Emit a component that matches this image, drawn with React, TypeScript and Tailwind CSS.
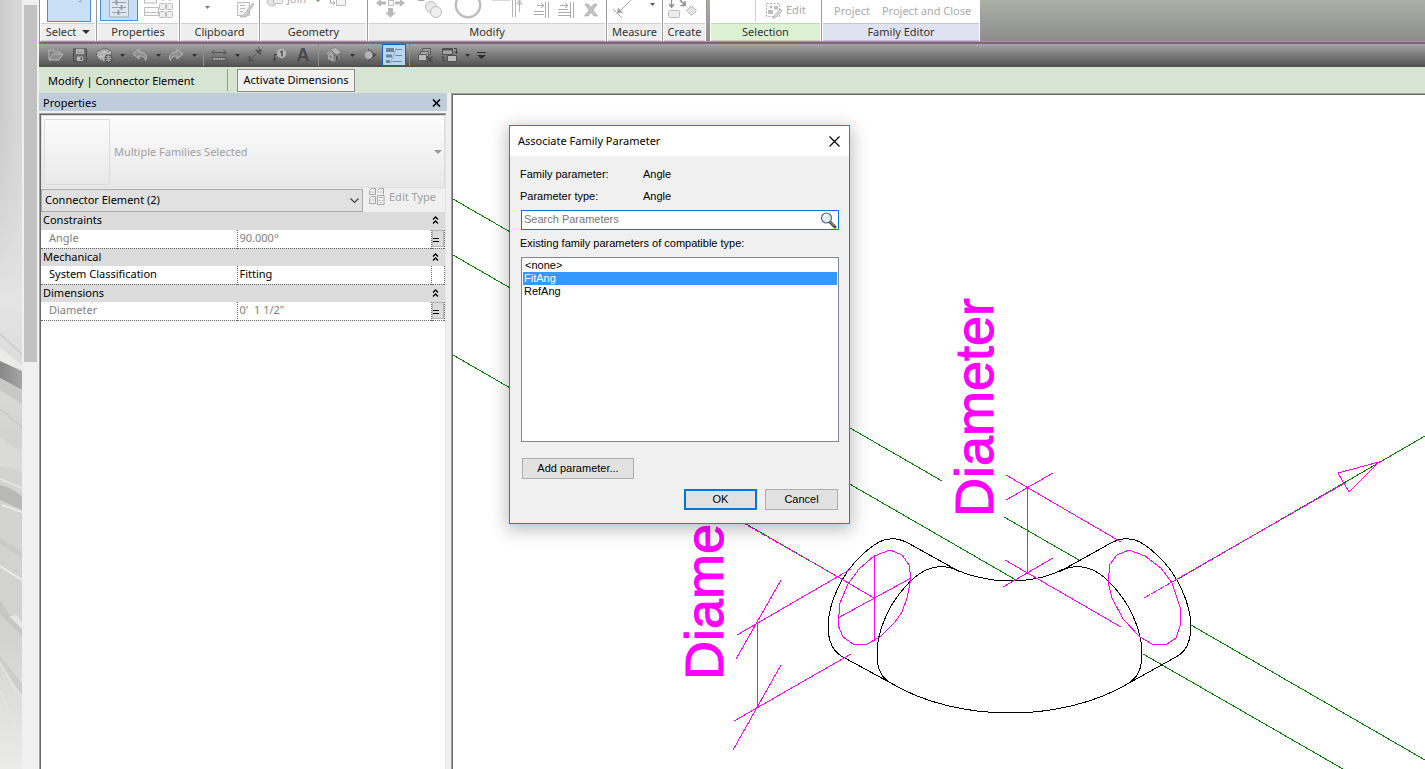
import React, { useState, type ReactNode } from 'react';

const UI = "font-['Noto_Sans','Open_Sans',sans-serif] text-[11px] leading-4";

/* ---------- small drawings ---------- */

function Caret({ className }: { className: string }) {
  return (
    <svg width="8" height="4" viewBox="0 0 8 4" className={className} aria-hidden="true">
      <path d="M0 0h8L4 4z" fill="currentColor" />
    </svg>
  );
}

function Backdrop() {
  return (
    <svg width="22" height="769" viewBox="0 0 22 769" preserveAspectRatio="none" className="block h-full w-[22px] shrink-0" aria-hidden="true">
      <defs>
        <linearGradient id="bdTop" x1="0" y1="0" x2="1" y2="0">
          <stop offset="0" stopColor="#cbcbcb" />
          <stop offset="1" stopColor="#dadada" />
        </linearGradient>
        <linearGradient id="bdLow" x1="0" y1="0" x2="0" y2="1">
          <stop offset="0" stopColor="#d6d6d6" stopOpacity="0" />
          <stop offset="0.3" stopColor="#e4e4e4" />
          <stop offset="0.5" stopColor="#d3d3d2" />
          <stop offset="0.8" stopColor="#d2d2d1" />
          <stop offset="1" stopColor="#ebebea" />
        </linearGradient>
        <linearGradient id="bdDark" x1="0" y1="0" x2="1" y2="0">
          <stop offset="0" stopColor="#868686" />
          <stop offset="1" stopColor="#a6a6a6" />
        </linearGradient>
      </defs>
      <rect width="22" height="769" fill="url(#bdTop)" />
      <rect y="100" width="22" height="669" fill="url(#bdLow)" />
      <path d="M0 333L22 353v2L0 335z" fill="#cdcdcd" />
      <path d="M0 348L22 365v6L0 361z" fill="#ebebea" />
      <path d="M0 361L22 371v19L0 378z" fill="url(#bdDark)" />
      <path d="M0 378L22 390v14L0 390z" fill="#c8c8c7" />
      <path d="M0 409L22 427" stroke="#bcbcbb" />
      <path d="M0 436Q12 450 22 449v22L0 466z" fill="#dadad9" />
      <path d="M0 479L22 488" stroke="#e6e6e5" strokeWidth="2" />
      <path d="M0 485Q12 488 22 496v14L0 500z" fill="#b9b9b8" />
      <path d="M2 505L22 512" stroke="#e9e9e8" strokeWidth="2" />
      <path d="M0 538L22 552v6L0 544z" fill="#cacac9" />
      <path d="M0 566L22 580" stroke="#ececeb" strokeWidth="2" />
      <path d="M0 600L9 614l13 8v14L0 614z" fill="#c6c6c5" />
      <path d="M9 616l8-1 5 8v6z" fill="#e6e6e5" />
      <path d="M0 655L22 684v10L0 666z" fill="#cdcdcc" />
      <path d="M0 663L22 700" stroke="#e3e3e2" strokeWidth="2" />
      <path d="M0 690L20 740" stroke="#e6e6e5" />
    </svg>
  );
}

const light = '#b9b9b9';
const mid = '#8b8b8b';
const dark = '#4a4a4a';

const OpenIcon = () => (
  <svg width="18" height="16" viewBox="0 0 18 16">
    <path d="M2 13V3h4l1 2h6v2" fill="none" stroke={light} />
    <path d="M2 13l4-6h10l-4 6z" fill={mid} stroke={light} />
  </svg>
);
const SaveIcon = () => (
  <svg width="16" height="16" viewBox="0 0 16 16">
    <path d="M1.500 2h13v12h-13z" fill="#6c6c6c" stroke={dark} />
    <path d="M4 2h8v5H4z" fill={light} />
    <path d="M5 9.500h6V14H5z" fill={light} />
    <path d="M8.500 10.500h1.500V13H8.500z" fill={dark} />
    <path d="M5 4h6M5 5.500h6" stroke={mid} strokeWidth=".7" />
  </svg>
);
const CubesIcon = () => (
  <svg width="17" height="16" viewBox="0 0 17 16">
    <path d="M1 4.500L4.500 3 8 1l4 1.500L15.500 4v6L8 14.500 1 11z" fill="#a4a4a4" stroke="#6a6a6a" />
    <path d="M1 5l3.500 1.700L8 5l4 1.700 3.500-2M4.500 3L8 5l4-2.200M4.500 7v5.500M8 5v9M1 8l3.500 2L8 8.500" fill="none" stroke="#d0d0d0" strokeWidth=".8" />
    <circle cx="12.500" cy="11.500" r="3.600" fill="#6b6b6b" stroke={dark} />
    <path d="M9 11.500h7M12.500 8v7M10 9.500h5M10 13.500h5" stroke={light} strokeWidth=".7" />
  </svg>
);
const UndoIcon = () => (
  <svg width="16" height="14" viewBox="0 0 16 14">
    <path d="M7 1L1 6l6 5V8c4 0 6 1 6.500 4.500C16 8 13 4 7 4z" fill="#8f8f8f" stroke={light} strokeLinejoin="round" />
  </svg>
);
const RedoIcon = () => (
  <svg width="16" height="14" viewBox="0 0 16 14">
    <path d="M9 1l6 5-6 5V8c-4 0-6 1-6.500 4.500C0 8 3 4 9 4z" fill="#8f8f8f" stroke={light} strokeLinejoin="round" />
  </svg>
);
const MeasureIcon = () => (
  <svg width="16" height="12" viewBox="0 0 16 12">
    <path d="M1 3.500h14M3.500 1L1 3.500 3.500 6M12.500 1L15 3.500 12.500 6" fill="none" stroke="#525252" />
    <path d="M1 8.500h14v3H1z" fill={mid} stroke="#525252" strokeWidth=".8" />
    <path d="M3.500 9v1.500M6 9v1.500M8.500 9v1.500M11 9v1.500" stroke={light} />
  </svg>
);
const AlignedDimIcon = () => (
  <svg width="18" height="17" viewBox="0 0 18 17">
    <path d="M3.500 13.500l10-10" fill="none" stroke="#525252" strokeDasharray="4 1" />
    <path d="M3 9v5h5zM9.500 3h5v5zM12 0l5 5M0 11l5 5" fill="#5a5a5a" stroke="#525252" strokeWidth=".8" />
  </svg>
);
const TagIcon = () => (
  <svg width="16" height="15" viewBox="0 0 16 15">
    <path d="M7 6.500H3.500V11" fill="none" stroke={dark} strokeWidth="1.200" />
    <path d="M1.500 10.500h4L3.500 14z" fill={dark} />
    <circle cx="10.500" cy="5.500" r="4.700" fill="#b4b4b4" />
    <path d="M9.300 4.200l1.600-1V8.500" fill="none" stroke="#444" strokeWidth="1.300" />
  </svg>
);
const HouseIcon = () => (
  <svg width="16" height="16" viewBox="0 0 16 16">
    <path d="M2 6.500L5 4l3 5v6l-6-3z" fill="#a9a9a9" />
    <path d="M8 9l6-2.500V12l-6 3z" fill="#8a8a8a" stroke="#686868" strokeWidth=".6" />
    <path d="M0 7l4.500-5L10 .500 15.500 6l-5.500 2L5.500 3 1.500 8z" fill="#b8b8b8" stroke="#6e6e6e" strokeWidth=".7" />
    <path d="M10 9.500l2-.8v4L10 13.500z" fill="#505050" />
    <path d="M3.500 8l2 1v2.500l-2-1z" fill="#777" />
  </svg>
);
const SectionIcon = () => (
  <svg width="14" height="14" viewBox="0 0 14 14">
    <path d="M5 .500L13.500 7 5 13.500z" fill={dark} />
    <circle cx="5.500" cy="7" r="4.200" fill="#b4b4b4" stroke="#777" strokeWidth=".6" />
  </svg>
);
const ThinLinesIcon = () => (
  <svg width="16" height="15" viewBox="0 0 16 15">
    <path d="M0 0h8v4H0zM0 6.500h6v3H0zM0 12h4v3H0z" fill="#6f8499" />
    <path d="M9.500 1.500H16M9.500 7.500h6.500M6.500 13.500H16" stroke="#6f8499" />
    <path d="M10.500 0L4.500 15" stroke="#8ea7bf" />
  </svg>
);
const CloseHiddenIcon = () => (
  <svg width="17" height="16" viewBox="0 0 17 16">
    <path d="M5.500 1.500h8v6h-8z" fill="#9c9c9c" stroke="#5b5b5b" />
    <path d="M3.500 4.500h8v6h-8z" fill="#a8a8a8" stroke="#5b5b5b" />
    <path d="M1.500 7.500h8v6h-8z" fill={light} stroke="#5b5b5b" />
    <path d="M10 9.500l5.500 6M15.500 9.500l-5.500 6" stroke="#3f3f3f" strokeWidth="1.500" strokeDasharray="1.500 .6" />
  </svg>
);
const SwitchIcon = () => (
  <svg width="17" height="16" viewBox="0 0 17 16">
    <path d="M1.500 1.500h10v6h-10z" fill="#a4a4a4" stroke="#505050" />
    <path d="M1.500 2.500h10" stroke="#505050" strokeWidth="2" />
    <path d="M6.500 8.500h9v6h-9z" fill={light} stroke="#505050" />
    <path d="M13 1.500h2.500V6M13.500 4.500l2 2 2-2M4.500 14H2v-4M0 11.500l2-2 2 2" fill="none" stroke="#404040" />
  </svg>
);

/* ---------- ribbon ---------- */

function Panel({ title, children, className, tone = 'bg-[#eeeeee] border-[#cfcfcf]', caret = false }: {
  title: string; children?: ReactNode; className: string; tone?: string; caret?: boolean;
}) {
  return (
    <section className={`flex h-[41px] shrink-0 flex-col border-r border-[#9a9a9a] bg-white ${className}`}>
      <div className="flex h-[23px] items-start overflow-hidden">{children}</div>
      <h2 className={`mx-px flex h-[18px] items-center justify-center gap-1.5 border-y pb-px font-normal text-[#333] ${tone}`}>
        {title}
        {caret && <Caret className="text-[#333]" />}
      </h2>
    </section>
  );
}

const g1 = '#bcbcbc';

function Ribbon() {
  return (
    <div className="flex h-[42px] shrink-0 items-start overflow-hidden border-b border-l border-b-[#6abf40] border-l-[#6abf40] bg-gradient-to-b from-[#aab0a6] to-[#8d8d8d]">
      <Panel title="Select" caret className="w-[57px]">
        <button aria-label="Modify" className="ml-[7px] flex h-[22px] w-11 items-end justify-center border border-t-0 border-[#4b8fd2] bg-[#c9dff6]">
          <svg width="12" height="22" viewBox="0 0 12 22" className="ml-6"><path d="M7 0L5.500 2.500H4" fill="none" stroke="#999" /></svg>
        </button>
      </Panel>
      <Panel title="Properties" className="w-[83px]">
        <button aria-label="Properties" className="ml-[3px] flex h-[21px] w-[38px] justify-center border border-t-0 border-[#4b8fd2] bg-[#c9dff6]">
          <svg width="22" height="20" viewBox="0 0 22 20">
            <path d="M1.500-2v19h19V-2" fill="#dfe6ee" stroke="#9fb0c3" />
            <path d="M4 2.500h14M4 7.500h14M4 12.500h14" stroke="#93a0af" />
            <path d="M8.500 0v5M13.500 5v5M10.500 10v5" stroke="#93a0af" strokeWidth="2" />
          </svg>
        </button>
        <svg width="34" height="20" viewBox="0 0 34 20" className="ml-1">
          <path d="M2.500-2v5h12v-5M2.500 7.500h14v8h-14z" fill="#fafafa" stroke={g1} />
          <path d="M2 12.500h14" stroke={g1} />
          <rect x="17.500" y="3.500" width="6" height="6" rx="1" fill="#eee" stroke={g1} />
          <rect x="24.500" y="3.500" width="6" height="6" rx="1" fill="#eee" stroke={g1} />
          <rect x="17.500" y="11.500" width="6" height="6" rx="1" fill="#eee" stroke={g1} />
          <rect x="24.500" y="11.500" width="6" height="6" rx="1" fill="#eee" stroke={g1} />
          <path d="M19 0h4M26 0h4" stroke={g1} />
        </svg>
      </Panel>
      <Panel title="Clipboard" className="w-[80px]">
        <svg width="78" height="20" viewBox="0 0 78 20">
          <path d="M25 6h5l-2.500 3z" fill="#777" />
          <path d="M57.500 2.500h12v13h-12z" fill="#f6f6f6" stroke={g1} />
          <path d="M60 5.500h5M60 8.500h5M60 11.500h3" stroke={g1} />
          <path d="M73 3l-6 7 2 2 5-8zM67 11l-4 4-3 2h6l3.500-4.500z" fill="#cfcfcf" stroke="#b0b0b0" strokeWidth=".8" />
        </svg>
      </Panel>
      <Panel title="Geometry" className="w-[108px]">
        <svg width="22" height="20" viewBox="0 0 22 20" className="ml-[5px]">
          <circle cx="7" cy="1" r="5" fill="#e3e3e3" stroke={g1} />
          <rect x="8.500" y="-3.500" width="9" height="7" rx="1" fill="#eee" stroke={g1} />
        </svg>
        <span className="-mt-[9px] text-[#a9a9a9]">Join</span>
        <svg width="36" height="20" viewBox="0 0 36 20" className="ml-2">
          <path d="M2 0h4L4 2z" fill="#888" />
          <path d="M16.500-3v6h4M19 1l2 2-2 2" fill="none" stroke="#a9a9a9" />
          <path d="M22.500-2.500h8l1 2v6h-9z" fill="#f3f3f3" stroke={g1} />
        </svg>
      </Panel>
      <Panel title="Modify" className="w-[239px]">
        <svg width="236" height="23" viewBox="368 0 236 23">
          <path d="M376 3l5-4v2.500h5v3h-5V7zM405 3l-5-4v2.500h-5v3h5V7zM390.500 17.500l-5.500-5h3V8h5v4.500h3z" fill="#b9b9b9" />
          <rect x="388.500" y=".5" width="5" height="5" fill="#fff" stroke={g1} />
          <circle cx="431" cy="7" r="5.500" fill="#e9e9e9" stroke={g1} />
          <circle cx="436" cy="12" r="5.500" fill="#efefef" stroke={g1} />
          <path d="M418 0h6M422-3l2 3" stroke="#aaa" strokeWidth="2" />
          <circle cx="468" cy="5" r="12.200" fill="none" stroke="#bdbdbd" strokeWidth="2.400" />
          <path d="M492 0h18M512.500 0v17M515.500 0v17M519.500 12V1M517 4l2.500-4 2.500 4z" stroke="#b4b4b4" fill="none" />
          <path d="M537 5.500h7M541 3l3 2.500-3 2.500M534 11.500h10M534 14.500h10M545.500 2v16M548.500 2v16" fill="none" stroke="#aaa" />
          <path d="M560 5.500h8M565 3l3 2.500-3 2.500M558 9.500h10M558 12.500h12M558 15.500h12M570.500 2v16M573.500 2v16" fill="none" stroke="#aaa" />
          <path d="M585 4l3 0 3 3.500L594 4h3l-4 6 4.500 6H594l-3-3.500-3 3.500h-3.500l4.500-6z" fill="#c2c2c2" stroke="#a8a8a8" strokeWidth=".7" />
        </svg>
      </Panel>
      <Panel title="Measure" className="w-[56px]">
        <svg width="54" height="23" viewBox="607 0 54 23">
          <path d="M632-1l-14 14M613 9l9 9" stroke="#a9a9a9" />
          <path d="M617 13.500l1-6 5 5z" fill="#a3a3a3" />
          <path d="M650 3h5l-2.500 3z" fill="#555" />
        </svg>
      </Panel>
      <Panel title="Create" className="w-[44px]">
        <svg width="42" height="23" viewBox="663 0 42 23">
          <path d="M671.500 0v7M669 4l2.500 3.500L674 4" fill="none" stroke="#8e8e8e" strokeWidth="1.300" />
          <path d="M680 0l5 5M685 1v4.500h-4.500" fill="none" stroke="#8e8e8e" strokeWidth="1.500" />
          <rect x="668.500" y="10.500" width="11" height="7" rx="1" fill="#eee" stroke={g1} />
          <path d="M691.500 5.500l5 5-5 5-5-5z" fill="#e2e2e2" stroke={g1} />
        </svg>
      </Panel>
      <Panel title="Selection" className="ml-[3px] w-[112px]" tone="bg-[#dcf1d2] border-[#bdd8b0]">
        <div className="ml-[45px] h-[22px] w-px bg-[#d0d0d0]" />
        <button className="ml-[9px] flex h-5 items-center gap-1 text-[#a9a9a9]">
          <svg width="17" height="17" viewBox="0 0 17 17">
            <path d="M1.500 1.500h13v13h-13z" fill="none" stroke="#aaa" strokeDasharray="2 1.500" />
            <path d="M3 8h5v4H3zM9 4h4v3.500H9z" fill="#bdbdbd" />
            <circle cx="6" cy="5" r="1.600" fill="#bdbdbd" />
            <path d="M15.500 7L9 13.500l-1 3L11 15l6-6z" fill="#ddd" stroke="#a5a5a5" strokeWidth=".8" />
          </svg>
          Edit
        </button>
      </Panel>
      <Panel title="Family Editor" className="w-[158px] border-r-0" tone="bg-[#dfe3f1] border-[#bfc4d6]">
        <button className="ml-3 h-[22px] text-[#a9a9a9]">Project</button>
        <button className="ml-3 h-[22px] text-[#a9a9a9]">Project and Close</button>
      </Panel>
    </div>
  );
}

/* ---------- quick access toolbar ---------- */

function Tool({ label, children, active = false }: { label: string; children: ReactNode; active?: boolean }) {
  return (
    <button
      aria-label={label}
      aria-pressed={active}
      className={`flex w-6 shrink-0 items-center justify-center ${active ? 'h-[22px] border border-[#0f63bd] bg-[#b9d6f2]' : 'h-full'}`}
    >
      {children}
    </button>
  );
}
const Drop = ({ label }: { label: string }) => (
  <button aria-label={label} className="flex h-full w-3 shrink-0 items-center justify-center">
    <svg width="5" height="3" viewBox="0 0 5 3"><path d="M0 0h5L2.500 3z" fill="#2f2f2f" /></svg>
  </button>
);
const Sep = () => <div className="mx-[3px] h-full w-px shrink-0 bg-[#8f8f8f]" />;

function QuickAccess() {
  return (
    <div className="flex h-[25px] shrink-0 items-center border-t-2 border-t-[#6f6f6f] bg-gradient-to-b from-[#a6a6a6] to-[#4f4f4f] pb-px pl-[5px]">
      <Tool label="Open"><OpenIcon /></Tool>
      <Tool label="Save"><SaveIcon /></Tool>
      <Tool label="Synchronize"><CubesIcon /></Tool>
      <Drop label="Synchronize options" />
      <Tool label="Undo"><UndoIcon /></Tool>
      <Drop label="Undo history" />
      <Tool label="Redo"><RedoIcon /></Tool>
      <Drop label="Redo history" />
      <Sep />
      <Tool label="Measure"><MeasureIcon /></Tool>
      <Drop label="Measure options" />
      <Tool label="Aligned dimension"><AlignedDimIcon /></Tool>
      <Tool label="Tag by category"><TagIcon /></Tool>
      <Tool label="Text"><span className="font-['Liberation_Sans',sans-serif] text-[18px] font-bold leading-5 text-[#4a4a4a]">A</span></Tool>
      <Sep />
      <Tool label="Default 3D view"><HouseIcon /></Tool>
      <Drop label="3D view options" />
      <Tool label="Section"><SectionIcon /></Tool>
      <Tool label="Thin lines" active><ThinLinesIcon /></Tool>
      <Sep />
      <Tool label="Close hidden windows"><CloseHiddenIcon /></Tool>
      <Tool label="Switch windows"><SwitchIcon /></Tool>
      <Drop label="Switch windows options" />
      <button aria-label="Customize toolbar" className="flex h-full w-4 items-center justify-center">
        <svg width="9" height="7" viewBox="0 0 9 7"><path d="M0 .500h9" stroke="#2f2f2f" /><path d="M0 3h9L4.500 7z" fill="#2f2f2f" /></svg>
      </button>
    </div>
  );
}

/* ---------- properties palette ---------- */

type Row = { name: string; value: string; readOnly?: boolean; linked?: boolean };
const groups: { title: string; rows: Row[] }[] = [
  { title: 'Constraints', rows: [{ name: 'Angle', value: '90.000°', readOnly: true, linked: true }] },
  { title: 'Mechanical', rows: [{ name: 'System Classification', value: 'Fitting' }] },
  { title: 'Dimensions', rows: [{ name: 'Diameter', value: '0\'\u00a0 1 1/2"', readOnly: true, linked: true }] },
];

function PropertyGrid() {
  return (
    <table className="w-full table-fixed border-collapse text-left">
      <colgroup>
        <col className="w-[196px]" />
        <col />
        <col className="w-[13px]" />
      </colgroup>
      {groups.map((g) => (
        <tbody key={g.title}>
          <tr className="h-[18px] bg-[#dcdcdc]">
            <th colSpan={3} scope="rowgroup" className="p-0 align-top font-normal">
              <div className="flex items-center justify-between pl-[2px] pr-[6px]">
                {g.title}
                <button aria-label={`Collapse ${g.title}`}>
                  <svg width="7" height="8" viewBox="0 0 7 8"><path d="M1 3.500L3.500 1 6 3.500M1 7.500L3.500 5 6 7.500" fill="none" stroke="#000" strokeWidth="1.300" /></svg>
                </button>
              </div>
            </th>
          </tr>
          {g.rows.map((r) => (
            <tr key={r.name} className={`h-[18px] border-b border-dotted border-[#666] ${r.readOnly ? 'text-[#808080]' : 'text-black'}`}>
              <th scope="row" className="p-0 pl-2 align-top font-normal">{r.name}</th>
              <td className="border-x border-dotted border-[#666] p-0 pl-[2px] align-top">{r.value}</td>
              <td className="border-r border-dotted border-[#666] p-0 align-top">
                {r.linked && (
                  <button aria-label={`Associate ${r.name}`} className="flex h-[17px] w-full items-end border border-[#b5b5b5] bg-[#dcdcdc] pb-[3px]">
                    <svg width="6" height="5" viewBox="0 0 6 5"><path d="M0 .500h6M0 3.500h6" stroke="#000" /></svg>
                  </button>
                )}
              </td>
            </tr>
          ))}
        </tbody>
      ))}
    </table>
  );
}

function Palette() {
  return (
    <aside className="flex w-[408px] shrink-0 flex-col bg-[#f0f0f0]">
      <header className="flex h-[18px] items-center justify-between bg-[#bfcddb] pl-1 pr-[6px] pt-px text-black">
        <h2 className="font-normal">Properties</h2>
        <button aria-label="Close properties">
          <svg width="9" height="8" viewBox="0 0 9 8"><path d="M1 .500l7 7M8 .500l-7 7" stroke="#000" strokeWidth="1.600" /></svg>
        </button>
      </header>
      <div className="mr-px mt-[2px] flex grow flex-col border-l border-t border-[#a0a0a0]">
        <div className="flex grow flex-col border-l border-r border-t border-l-[#696969] border-r-[#e3e3e3] border-t-[#696969] bg-white">
          <button className="flex h-[73px] items-center border border-[#dedede] bg-gradient-to-b from-[#fdfdfd] to-[#e8e8e8] pl-[2px] pr-[2px] text-[#a0a0a0]">
            <span className="h-[66px] w-[66px] border border-[#dcdcdc]" />
            <span className="ml-1">Multiple Families Selected</span>
            <Caret className="ml-auto text-[#999]" />
          </button>
          <div className="flex h-6 items-center bg-[#f0f0f0]">
            <div className="relative w-[322px]">
              <select aria-label="Element filter" className="block h-[23px] w-full appearance-none border border-[#a9a9a9] bg-[#e1e1e1] pl-[3px] text-black">
                <option>Connector Element (2)</option>
              </select>
              <svg width="9" height="6" viewBox="0 0 9 6" className="pointer-events-none absolute right-1 top-[9px]"><path d="M.500 .500l4 4 4-4" fill="none" stroke="#444" strokeWidth="1.200" /></svg>
            </div>
            <button className="ml-[5px] flex items-center gap-1 self-start text-[#a0a0a0]">
              <svg width="17" height="17" viewBox="0 0 17 17">
                <path d="M1.500 2.500l2-2h4v6h-6zM9.500 2.500l2-2h4v6M1.500 10.500l2-2h4v7h-6z" fill="none" stroke="#a6a6a6" />
                <path d="M1 4h6M9 4h6M1 12h6" stroke="#c4c4c4" strokeWidth=".8" />
                <path d="M9.500 7.500h6.500v9H9.500z" fill="#f7f7f7" stroke="#a6a6a6" />
                <path d="M11 9.500h4M11 12.500h1.500M14 12.500h1M12 14.500h2" stroke="#a6a6a6" />
              </svg>
              Edit Type
            </button>
          </div>
          <PropertyGrid />
        </div>
      </div>
    </aside>
  );
}

/* ---------- family model view ---------- */

const ringLeft = 'M890 550L902 555L909 565L911 578L907 598L902 612L895 622L880 637L867 644L853 644L843 637L838 625L840 603L848 584L859 569L874 556Z';
const ringRight = 'M1129 550L1117 555L1110 564L1108 582L1112 598L1123 619L1140 637L1152 644L1167 644L1176 638L1181 623L1180 607L1172 583L1161 568L1145 556Z';

function ModelView() {
  return (
    <svg className="block h-full w-full" aria-label="3D view">
      <g transform="translate(-453 -95)" fill="none" shapeRendering="crispEdges">
        <path stroke="#008000" d="M453 199L942 481M1004 517L1079 560M453 255L1016 580M453 355L838 577M1178 579L1425 436M1191 625L1425 760L1900 1034M1143 654L1343 769L1900 1090" />
        <g stroke="#000">
          <path d="M908 543C902 540 896 538 890 539C880 539 868 549 860 557C842 574 829 602 828 625C828 640 833 652 843 657L889 682C925 704 970 713 1010 713C1050 713 1095 704 1131 682L1176 657C1186 652 1191 640 1191 625C1190 602 1177 574 1159 557C1151 549 1139 539 1129 539C1123 538 1117 540 1111 543" />
          <path d="M908 543L953 568C968 576 990 581 1010 581C1030 581 1051 576 1066 568L1111 543" />
          <path d="M960 572C952 567 945 566 937 567C920 569 908 583 900 593C888 608 877 632 877 653C877 667 880 676 889 682" />
          <path d="M1059 572C1067 567 1074 566 1082 567C1099 569 1111 583 1119 593C1131 608 1142 632 1142 653C1142 667 1139 676 1130 682" />
        </g>
        <g stroke="#ff00ff">
          <path d={ringLeft} />
          <path d={ringRight} />
          <path d="M874.500 556V640M838 618L911 578M874 598L838 577" />
          <path strokeDasharray="5 2" d="M838 577L745 524" />
          <path strokeDasharray="7 1" d="M1144 598L1345 483" />
          <path d="M1338 473L1379 462L1349 492Z" />
          <path d="M1006 475L1121 542M1006 500L1053 473M1027.500 488V573M1005 560L1121 627M1003 587L1053 558" />
          <path d="M757.500 624V708M737 635L851 569M736 659L781 580M734 721L851 654M733 750L781 665" />
        </g>
      </g>
      <g fill="#ff00ff" stroke="#ff00ff" className="font-['Liberation_Sans',Arial,sans-serif] text-[54px]">
        <text transform="translate(540 422) rotate(-90)">Diameter</text>
        <text transform="translate(270 585) rotate(-90)">Diameter</text>
      </g>
    </svg>
  );
}

/* ---------- dialog ---------- */

const parameters = ['<none>', 'FitAng', 'RefAng'];

function AssociateDialog() {
  const [selected, setSelected] = useState('FitAng');
  const btn = 'h-[21px] bg-[#e1e1e1] text-center';
  return (
    <div
      role="dialog"
      aria-labelledby="dlg-title"
      className="absolute left-[56px] top-[30px] flex h-[399px] w-[341px] flex-col border border-[#1f7fd4] bg-[#f0f0f0] font-['Liberation_Sans',Arial,sans-serif] text-[11px] leading-[13px] text-black shadow-[0_4px_16px_2px_rgba(0,0,0,0.26)]"
    >
      <header className="flex h-[30px] shrink-0 items-center justify-between bg-white pl-2 pr-[9px]">
        <h1 id="dlg-title" className="font-['Noto_Sans','Open_Sans',sans-serif] text-[11px] leading-4 font-normal">Associate Family Parameter</h1>
        <button aria-label="Close">
          <svg width="11" height="11" viewBox="0 0 11 11"><path d="M.500 .500l10 10M10.500 .500l-10 10" stroke="#000" strokeWidth="1.200" /></svg>
        </button>
      </header>
      <div className="flex grow flex-col px-[10px] pb-[13px] pt-3">
        <dl className="grid grid-cols-[123px_1fr] gap-y-[9px]">
          <dt>Family parameter:</dt>
          <dd>Angle</dd>
          <dt>Parameter type:</dt>
          <dd>Angle</dd>
        </dl>
        <div className="mt-[7px] ml-px flex h-5 items-center border border-[#0078d7] bg-white pl-[2px] pr-px">
          <input aria-label="Search Parameters" placeholder="Search Parameters" className="min-w-0 grow bg-transparent pb-px outline-none placeholder:text-[#757575]" />
          <svg width="17" height="17" viewBox="0 0 17 17" aria-hidden="true">
            <path d="M10 10l5 5" stroke="#4a4a4a" strokeWidth="3" strokeLinecap="round" />
            <path d="M10.500 10l4 4" stroke="#a5a5a5" strokeWidth="1" />
            <circle cx="6.500" cy="6" r="5" fill="#dceff6" stroke="#666" strokeWidth="1.200" />
            <path d="M3.500 6a3 3 0 0 1 3-3" fill="none" stroke="#fff" strokeWidth="1.300" />
          </svg>
        </div>
        <p id="dlg-list" className="mt-[7px]">Existing family parameters of compatible type:</p>
        <ul role="listbox" aria-labelledby="dlg-list" className="ml-px mt-[7px] h-[185px] border border-[#828790] bg-white px-px pt-px">
          {parameters.map((p) => (
            <li
              key={p}
              role="option"
              aria-selected={p === selected}
              onClick={() => setSelected(p)}
              className={`h-[13px] px-px ${p === '<none>' ? 'pl-[2px]' : ''} ${p === selected ? 'bg-[#3399ff] text-white' : ''}`}
            >
              {p}
            </li>
          ))}
        </ul>
        <button className={`ml-[2px] mt-4 w-[112px] border border-[#adadad] ${btn}`}>Add parameter...</button>
        <div className="mr-px mt-auto flex justify-end gap-2">
          <button className={`w-[73px] border-2 border-[#0078d7] ${btn}`}>OK</button>
          <button className={`w-[73px] border border-[#adadad] ${btn}`}>Cancel</button>
        </div>
      </div>
    </div>
  );
}

export default function App() {
  return (
    <div className={`flex h-screen w-full overflow-hidden bg-[#f0f0f0] text-black ${UI}`}>
      <Backdrop />
      <div className="w-[17px] shrink-0 bg-[#f0f0f0] px-[2px] pt-[5px]">
        <div className="h-[357px] w-[13px] bg-[#c2c2c2]" />
      </div>
      <div className="flex min-w-0 grow flex-col">
        <Ribbon />
        <QuickAccess />
        <div className="flex h-[26px] shrink-0 items-center bg-[#d8e4d2] pl-[9px]">
          <span className="w-[179px] pt-px">Modify | Connector Element</span>
          <div className="h-[22px] w-px bg-[#9a9a9a]" />
          <button className="ml-[9px] h-[23px] w-[118px] border border-[#8f8f8f] bg-[#f2f2f2]">Activate Dimensions</button>
        </div>
        <div className="flex min-h-0 grow">
          <Palette />
          <div className="ml-1 flex min-w-0 grow border-l border-t border-[#a0a0a0]">
            <main className="relative min-w-0 grow border-l border-t border-[#696969] bg-white">
              <ModelView />
              <AssociateDialog />
            </main>
          </div>
        </div>
      </div>
    </div>
  );
}
